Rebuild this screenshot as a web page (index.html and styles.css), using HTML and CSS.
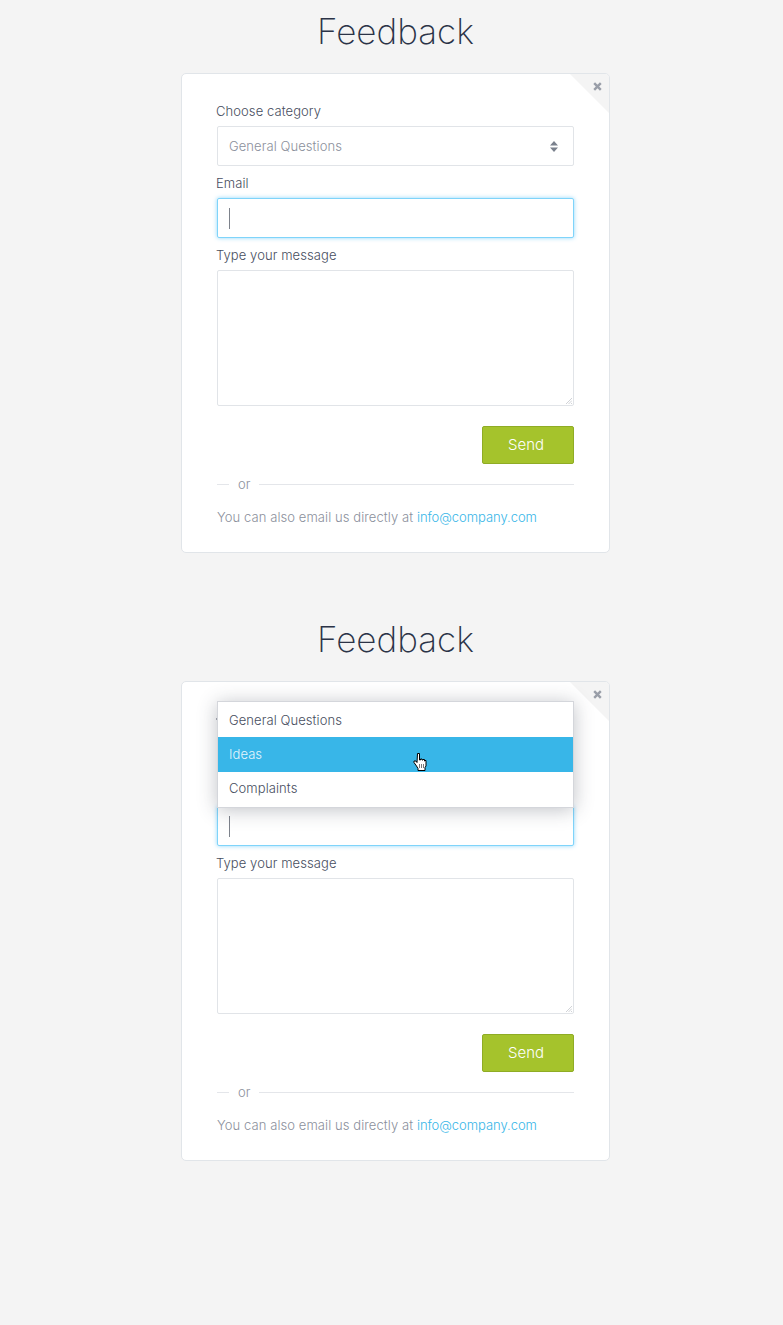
FILE: index.html
```html
<!DOCTYPE html>
<html lang="en">
<head>
<meta charset="utf-8">
<title>Feedback</title>
<link rel="stylesheet" href="styles.css">
</head>
<body>
<section class="panel">
  <h1 class="title">Feedback</h1>
  <div class="card">
    <span class="fold"></span>
    <svg class="close" viewBox="0 0 9 9" width="9" height="9"><path d="M1.2 1.2l6.6 6.6M7.800 1.200l-6.600 6.600"/></svg>
    <div class="label">Choose category</div>
    <div class="field select"><span>General Questions</span>
      <svg class="arrows" viewBox="0 0 8 11" width="8" height="11"><path d="M4 0l4 4.500H0zM4 11L0 6.500h8z"/></svg>
    </div>
    <div class="label">Email</div>
    <div class="field focus"><span class="caret"></span></div>
    <div class="label">Type your message</div>
    <div class="message-wrap">
      <textarea class="message"></textarea>
      <svg class="grip" viewBox="0 0 6 6" width="6" height="6"><path d="M0 6l6-6M2.500 6L6 2.500M5 6l1-1"/></svg>
    </div>
    <div class="actions"><button class="send" type="button">Send</button></div>
    <div class="divider"><span class="rule short"></span><span class="or">or</span><span class="rule"></span></div>
    <p class="note">You can also email us directly at <a href="#">info@company.com</a></p>
  </div>
</section>
<section class="panel">
  <h1 class="title">Feedback</h1>
  <div class="card">
    <span class="fold"></span>
    <svg class="close" viewBox="0 0 9 9" width="9" height="9"><path d="M1.2 1.2l6.6 6.6M7.800 1.200l-6.600 6.600"/></svg>
    <span class="sliver"></span>
    <ul class="menu">
      <li>General Questions</li>
      <li class="active">Ideas</li>
      <li>Complaints</li>
    </ul>
    <svg class="pointer" viewBox="0 0 14 18" width="14" height="18">
      <path class="hand" d="M4.500.5h2v6.500h1V6h1.500v1h1V6.500h1.500V8h.5v-.5H13V13l-1 1.500v3H5v-2L3.500 13 1 9.500V8h2l1 1.500z"/>
      <path class="stripes" d="M6.500 11v4M8.500 11v4M10.500 11v4"/>
    </svg>
    <div class="covered"></div>
    <div class="field focus"><span class="caret"></span></div>
    <div class="label">Type your message</div>
    <div class="message-wrap">
      <textarea class="message"></textarea>
      <svg class="grip" viewBox="0 0 6 6" width="6" height="6"><path d="M0 6l6-6M2.500 6L6 2.500M5 6l1-1"/></svg>
    </div>
    <div class="actions"><button class="send" type="button">Send</button></div>
    <div class="divider"><span class="rule short"></span><span class="or">or</span><span class="rule"></span></div>
    <p class="note">You can also email us directly at <a href="#">info@company.com</a></p>
  </div>
</section>
</body>
</html>
```
FILE: styles.css
```css
* { box-sizing: border-box; }
html, body { margin: 0; padding: 0; }
body {
  height: 1325px;
  background: #f4f4f4;
  font-family: Inter, "Liberation Sans", sans-serif;
  font-size: 13px;
  font-weight: 300;
  letter-spacing: 0.08px;
  color: #474e60;
  overflow: hidden;
}
.panel { width: 429px; margin: 0 0 55px 181px; height: 553px; }
.title {
  margin: 0;
  height: 73px;
  padding-top: 8px;
  font-size: 35px;
  line-height: 47px;
  font-weight: 200;
  letter-spacing: 0;
  color: #2b3347;
  text-align: center;
}
.card {
  position: relative;
  height: 480px;
  padding: 20px 35px 0;
  background: #fff;
  border: 1px solid #e1e5e9;
  border-radius: 5px;
}
.fold {
  position: absolute;
  top: 0;
  right: 0;
  width: 39px;
  height: 39px;
  background: #f4f4f4;
  clip-path: polygon(0 0, 100% 0, 100% 100%);
  border-top-right-radius: 4px;
}
.close {
  position: absolute;
  top: 8px;
  right: 7px;
}
.close path { fill: none; stroke: #999ea8; stroke-width: 2.4; }
.label {
  height: 32px;
  margin-left: -1px;
  line-height: 35px;
}
.covered { height: 104px; }
.sliver {
  position: absolute;
  top: 36px;
  left: 34px;
  width: 1px;
  height: 2px;
  background: #a8acb4;
}
.field {
  display: flex;
  align-items: center;
  justify-content: space-between;
  height: 40px;
  padding: 0 11px;
  background: #fff;
  border: 1px solid #e1e4e8;
  border-radius: 2px;
}
.select { color: #8b909c; padding-right: 15px; }
.arrows path { fill: #7a818d; }
.focus {
  border-color: #7fd4fa;
  box-shadow: 0 0 4px rgba(115, 205, 250, 0.8);
}
.caret { display: block; width: 1px; height: 21px; background: #7d828b; }
.message-wrap { position: relative; height: 136px; }
.message {
  display: block;
  width: 100%;
  height: 136px;
  background: #fff;
  border: 1px solid #e1e4e8;
  border-radius: 2px;
  outline: none;
  margin: 0;
  resize: none;
}
.grip { position: absolute; right: 2px; bottom: 2px; }
.grip path { fill: none; stroke: #c5c8cd; stroke-width: 0.8; }
.actions { display: flex; justify-content: flex-end; margin-top: 20px; }
.send {
  width: 92px;
  height: 38px;
  padding: 0 4px 2px 0;
  font: inherit;
  font-size: 15px;
  letter-spacing: 0;
  color: #fff;
  background: #a5c32c;
  border: 1px solid #8fac25;
  border-radius: 2px;
}
.divider { display: flex; align-items: center; gap: 9px; height: 24px; margin-top: 8px; }
.rule { flex: 1; height: 1px; background: #e4e6ea; }
.rule.short { flex: none; width: 12px; }
.or { color: #8b909c; line-height: 23px; letter-spacing: 0; }
.note { margin: 9px 0 0; line-height: 24px; color: #8b909c; }
.note a { color: #38b6e8; text-decoration: none; letter-spacing: -0.04px; }
.menu {
  position: absolute;
  z-index: 2;
  top: 19px;
  left: 35px;
  width: 357px;
  margin: 0;
  padding: 0;
  list-style: none;
  background: #fff;
  border: 1px solid #d4d6db;
  box-shadow: 0 2px 18px rgba(60, 65, 80, 0.32);
}
.menu li { height: 35px; padding: 0 11px; line-height: 35px; }
.menu li:first-child { line-height: 37px; }
.menu li.active { background: #38b6e8; color: #e4f5fc; }
.menu li:last-child { line-height: 33px; }
.pointer { position: absolute; z-index: 3; top: 71px; left: 231px; }
.hand { fill: #fff; stroke: #000; stroke-width: 1; }
.stripes { fill: none; stroke: #777; stroke-width: 1; }
```
